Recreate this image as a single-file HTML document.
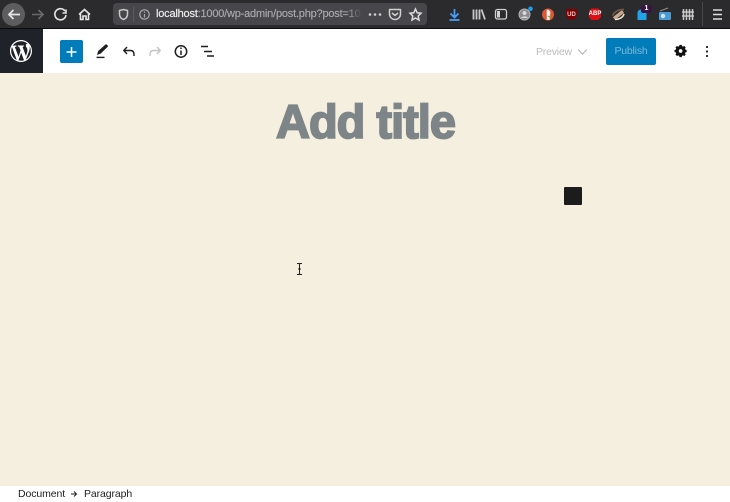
<!DOCTYPE html>
<html>
<head>
<meta charset="utf-8">
<style>
html,body{margin:0;padding:0;width:730px;height:502px;overflow:hidden;background:#f5efdf;font-family:"Liberation Sans",sans-serif}
#w{position:absolute;left:0;top:0;width:730px;height:502px;overflow:hidden;filter:blur(.3px)}
.a{position:absolute}
svg{position:absolute;overflow:visible}
</style>
</head>
<body>
<div id="w">
<div class="a" style="left:0;top:0;width:730px;height:28px;background:#2b2b2e"></div>
<div class="a" style="left:0;top:28px;width:730px;height:1px;background:#0c0c0d"></div>
<div class="a" style="left:0;top:29px;width:730px;height:44px;background:#fff"></div>
<div class="a" style="left:0;top:73px;width:730px;height:413px;background:#f5efdf"></div>
<div class="a" style="left:0;top:486px;width:730px;height:16px;background:#fff"></div>

<!-- browser -->
<div class="a" style="left:2px;top:3px;width:23px;height:23px;border-radius:50%;background:#5d5d60"></div>
<svg style="left:0;top:0" width="730" height="29" fill="none" stroke="#e4e4e6" stroke-width="1.6">
<path d="M20 14.500H9M13.500 10L9 14.500L13.500 19" stroke-width="1.800"/>
<path d="M43 14.500H32M38.500 10L43 14.500L38.500 19" stroke="#6a6a6d"/>
<path d="M65 11A5.600 5.600 0 1 0 66 15M66 9.500V13H62.500"/>
<path d="M79 14.500L84.500 9.500L90 14.500M80.500 13.500V19.500H83V16H86V19.500H88.500V13.500"/>
<path d="M454.500 9V17M450.500 13.500L454.500 17.500L458.500 13.500M449.500 20H459.500" stroke="#45a1ff" stroke-width="1.700"/>
<path d="M473.500 9.500V19.500M476.500 9.500V19.500M479.500 9.500V19.500M481.500 9.500L485 19.500" stroke="#c8c8ca" stroke-width="1.800"/>
<rect x="495.500" y="9.500" width="11" height="9.500" rx="2" stroke="#d0d0d2" stroke-width="1.300"/>
<rect x="497" y="11" width="3" height="6.500" fill="#d0d0d2" stroke="none"/>
<circle cx="524.500" cy="14.500" r="5.500" fill="#8a8a8c" stroke="#b4b4b6" stroke-width="1"/>
<circle cx="524.500" cy="13" r="2" fill="#d8d8da" stroke="none"/>
<path d="M521 18C522 15.800 527 15.800 528 18" fill="#d8d8da" stroke="none"/>
<circle cx="530.500" cy="8.800" r="2.300" fill="#1e9df0" stroke="none"/>
<circle cx="548" cy="14.500" r="6" fill="#de5833" stroke="none"/>
<path d="M547 9.500C550 9.800 551 12.500 550 15C549.500 17 549.500 18.500 550 19.800L546.500 20C547.500 17 546 13 547 9.500Z" fill="#f3f3f3" stroke="none"/>
<path d="M547 16.500L550.500 15.500V17.500Z" fill="#65bc46" stroke="none"/>
<path d="M566 9H577V15C577 17.500 573.500 19.500 571.500 20C569.500 19.500 566 17.500 566 15Z" fill="#800000" stroke="none"/>
<path d="M591.500 8.500H598L601 11V17L598 20H591.500L589 17V11Z" fill="#e00e14" stroke="none"/>
<path d="M614 18.500L623 11.500" stroke="#c9a98a" stroke-width="3.500"/>
<path d="M612.500 15.500C615 11 619 9.500 624 9.500" stroke="#6e5647" stroke-width="1.800"/>
<path d="M615 19.500C619 19.500 623 17.500 624 14" stroke="#f0e3d3" stroke-width="1.500"/>
<path d="M637.500 20V13Q637.500 10 641 9.500Q646.500 10 646.500 13V20Z" fill="#21a3ea" stroke="none"/>
<rect x="641" y="5" width="11" height="8" rx="2" fill="#3a1442" stroke="none"/>
<rect x="659" y="12" width="12" height="8" rx="1" fill="#4a9bd4" stroke="none"/>
<path d="M660 11L668 8" stroke="#8d8d8f" stroke-width="1.200"/>
<circle cx="663" cy="16" r="2.200" fill="#cfe4f2" stroke="none"/>
<path d="M683.500 9V20M686.500 9V20M689.500 9V20M692.500 9V20M682 12H694M682 16H694" stroke="#c9c9cb" stroke-width="1.500"/>
<path d="M702.500 2V26" stroke="#47474a" stroke-width="1"/>
<path d="M713 10H722M713 14.500H722M713 19H722" stroke="#dedee0" stroke-width="1.600"/>
</svg>
<div class="a" style="left:113px;top:3px;width:314px;height:22px;border-radius:4px;background:#47474b"></div>
<svg style="left:0;top:0" width="730" height="29" fill="none">
<path d="M119.500 10.500L123.500 9.500L127.500 10.500V14C127.500 17 125.500 18.800 123.500 19.500C121.500 18.800 119.500 17 119.500 14Z" stroke="#c8c8ca" stroke-width="1.500"/>
<path d="M133.500 7V22" stroke="#5c5c60"/>
<circle cx="144.500" cy="14.500" r="4.700" stroke="#a9a9ab" stroke-width="1.200"/>
<path d="M144.500 14V17.500M144.500 11.500V12.800" stroke="#a9a9ab" stroke-width="1.200"/>
<path d="M389.500 9.500H400.500V14A5.500 5.500 0 0 1 389.500 14Z" stroke="#d0d0d2" stroke-width="1.500" stroke-linejoin="round"/>
<path d="M392 13L395 15.500L398 13" stroke="#d0d0d2" stroke-width="1.500"/>
<path d="M415.500 9L417.200 12.800L421 13.200L418.200 16L419 20L415.500 18L412 20L412.800 16L410 13.200L413.800 12.800Z" stroke="#dcdcde" stroke-width="1.500"/>
<circle cx="370" cy="14.500" r="1.300" fill="#d0d0d2"/><circle cx="375" cy="14.500" r="1.300" fill="#d0d0d2"/><circle cx="380" cy="14.500" r="1.300" fill="#d0d0d2"/>
</svg>
<div class="a" style="left:156px;top:7px;width:207px;height:15px;overflow:hidden;font-size:11px;line-height:15px;color:#aaaaac;white-space:nowrap;letter-spacing:-.2px;-webkit-text-stroke:.15px currentColor"><span style="color:#f1f1f2">localhost</span>:1000/wp-admin/post.php?post=10</div>
<div class="a" style="left:346px;top:7px;width:18px;height:15px;background:linear-gradient(90deg,rgba(71,71,75,0),#47474b 90%)"></div>
<div class="a" style="left:566px;top:11px;width:11px;text-align:center;font-size:6px;line-height:8px;font-weight:bold;color:#e8c8c8">UD</div>
<div class="a" style="left:587px;top:10px;width:16px;text-align:center;font-size:6px;line-height:9px;font-weight:bold;color:#fff">ABP</div>
<div class="a" style="left:641px;top:5px;width:11px;text-align:center;font-size:7px;line-height:8px;font-weight:bold;color:#fff">1</div>

<!-- wp logo block -->
<div class="a" style="left:0;top:29px;width:43px;height:44px;background:#1f2329"></div>
<svg style="left:10px;top:40px" width="22" height="22" viewBox="0 0 20 20">
<path fill="#fff" d="M20 10c0-5.510-4.490-10-10-10C4.480 0 0 4.490 0 10c0 5.520 4.480 10 10 10 5.510 0 10-4.480 10-10zM7.780 15.370L4.370 6.220c.55-.02 1.170-.08 1.170-.08.5-.06.44-1.130-.06-1.110 0 0-1.450.11-2.370.11-.18 0-.37 0-.58-.01C4.120 2.690 6.870 1.110 10 1.110c2.330 0 4.450.87 6.050 2.340-.68-.11-1.650.39-1.650 1.580 0 .74.45 1.360.9 2.100.35.61.55 1.360.55 2.460 0 1.490-1.400 5-1.400 5l-3.030-8.370c.54-.02.82-.17.82-.17.5-.05.44-1.250-.06-1.220 0 0-1.440.12-2.380.12-.87 0-2.330-.12-2.330-.12-.5-.03-.56 1.200-.06 1.220l.92.08 1.260 3.410zM17.410 10c.24-.64.74-1.870.43-4.250.7 1.290 1.050 2.710 1.050 4.250 0 3.290-1.730 6.240-4.400 7.780.97-2.590 1.940-5.200 2.920-7.780zM6.100 18.090C3.120 16.650 1.110 13.530 1.110 10c0-1.300.23-2.480.72-3.590C3.250 10.300 4.670 14.200 6.100 18.090zm4.030-6.630l2.580 6.980c-.86.29-1.760.45-2.710.45-.79 0-1.570-.11-2.290-.33.81-2.380 1.620-4.740 2.420-7.100z"/>
</svg>

<!-- toolbar -->
<div class="a" style="left:60px;top:40px;width:23px;height:23px;border-radius:2px;background:#007cba"></div>
<svg style="left:0;top:29px" width="730" height="44" fill="none" stroke="#1e1e1e" stroke-width="1.500">
<path d="M71.500 18V28M66.500 23H76.500" stroke="#fff" stroke-width="1.500"/>
<path d="M97 26L98.200 22L105.500 15.500C106.500 15 107.800 16 108 17.500L100.800 24.500Z" fill="#1e1e1e" stroke="none"/>
<path d="M96.500 28.400H104.500" stroke-width="1.400"/>
<path d="M127 18L123.800 21.500L127 25M124 21.500H130.500C133 21.500 134 23 134 25.500V27" stroke-width="1.400"/>
<path d="M157 18L160.200 21.500L157 25M160 21.500H153.500C151 21.500 150 23 150 25.500V27" stroke="#c5c5c5" stroke-width="1.400"/>
<circle cx="181" cy="22.500" r="5.700" stroke-width="1.500"/>
<path d="M181 21.500V26M181 18.500V20" stroke-width="1.500"/>
<path d="M201 17.500H208M204 22.500H212M207 27H214" stroke-width="1.500"/>
<path d="M578 20.500L582.500 25L587 20.500" stroke="#b5b5b5" stroke-width="1.200"/>
<g transform="translate(680.600 22) scale(.7) translate(-680.600 -22)">
<path fill="#111" stroke="none" fill-rule="evenodd" d="M679 13.200H682.200L682.600 15.100L684.100 15.800L685.800 14.800L687.900 16.900L686.900 18.600L687.500 20L689.300 20.500V23.500L687.500 24L686.900 25.400L687.900 27.100L685.800 29.200L684.100 28.200L682.600 28.900L682.200 30.800H679L678.600 28.900L677.100 28.200L675.400 29.200L673.300 27.100L674.300 25.400L673.700 24L671.900 23.500V20.500L673.700 20L674.300 18.600L673.300 16.900L675.400 14.800L677.100 15.800L678.600 15.100ZM680.600 19.400A2.600 2.600 0 1 0 680.600 24.600A2.600 2.600 0 1 0 680.600 19.400Z"/>
</g>
<circle cx="707" cy="18" r="1.100" fill="#1e1e1e" stroke="none"/>
<circle cx="707" cy="22.500" r="1.100" fill="#1e1e1e" stroke="none"/>
<circle cx="707" cy="27" r="1.100" fill="#1e1e1e" stroke="none"/>
</svg>
<div class="a" style="left:536px;top:45px;font-size:10.500px;line-height:14px;color:#bcbcbc;white-space:nowrap;letter-spacing:-.2px">Preview</div>
<div class="a" style="left:606px;top:38px;width:50px;height:27px;border-radius:2px;background:#007cba;color:#7db9d9;font-size:10.500px;line-height:27px;text-align:center;letter-spacing:-.2px">Publish</div>

<!-- content -->
<div class="a" style="left:200px;top:95px;width:331px;text-align:center;font-size:47px;line-height:54px;font-weight:bold;color:#7e8589;letter-spacing:-1px;-webkit-text-stroke:1.800px #7e8589;white-space:nowrap">Add title</div>
<div class="a" style="left:564px;top:187px;width:18px;height:18px;border-radius:1px;background:#1c1c1c"></div>
<svg style="left:295px;top:263px" width="9" height="13" fill="none" stroke="#222" stroke-width="1">
<path d="M2 .5H4L4.500 1.500L5 .5H7M4.500 1.500V10.500M2 11.500H4L4.500 10.500L5 11.500H7M3 6H6"/>
</svg>

<!-- footer -->
<div class="a" style="left:18px;top:487px;font-size:10.500px;line-height:14px;color:#1e1e1e;white-space:nowrap;letter-spacing:-.1px">Document</div>
<svg style="left:70px;top:490px" width="9" height="8" fill="none" stroke="#1e1e1e" stroke-width="1"><path d="M1 4H6.500M4 1.500L6.500 4L4 6.500"/></svg>
<div class="a" style="left:84px;top:487px;font-size:10.500px;line-height:14px;color:#1e1e1e;white-space:nowrap;letter-spacing:-.1px">Paragraph</div>
</div>
</body>
</html>
